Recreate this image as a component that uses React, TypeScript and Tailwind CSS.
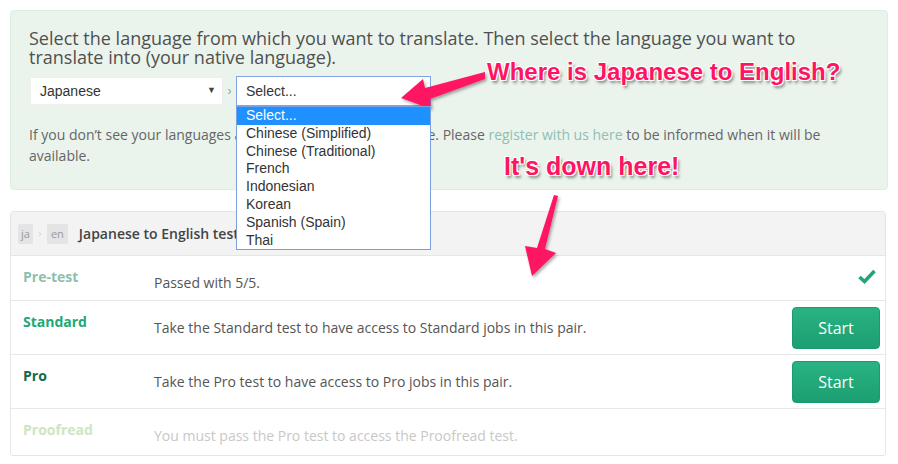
import React from 'react';

const options = [
  'Select...',
  'Chinese (Simplified)',
  'Chinese (Traditional)',
  'French',
  'Indonesian',
  'Korean',
  'Spanish (Spain)',
  'Thai',
];

const rows = [
  { label: 'Pre-test', labelColor: 'text-[#8dbfae]', text: 'Passed with 5/5.', textColor: 'text-[#555]', action: 'check', h: 'h-[45px]' },
  { label: 'Standard', labelColor: 'text-[#20a878]', text: 'Take the Standard test to have access to Standard jobs in this pair.', textColor: 'text-[#555]', action: 'start', h: 'h-[54px]' },
  { label: 'Pro', labelColor: 'text-[#116b47]', text: 'Take the Pro test to have access to Pro jobs in this pair.', textColor: 'text-[#555]', action: 'start', h: 'h-[54px]' },
  { label: 'Proofread', labelColor: 'text-[#cde6bf]', text: 'You must pass the Pro test to access the Proofread test.', textColor: 'text-[#c8c8c8]', action: 'none', h: 'h-[46px]' },
];

const shout =
  "font-['Liberation_Sans',Arial,sans-serif] font-bold text-[#ff1464] [text-shadow:1px_1px_0_#fff,-1px_-1px_0_#fff,1px_-1px_0_#fff,-1px_1px_0_#fff,2px_3px_3px_rgba(0,0,0,0.45)]";

const App: React.FC = () => {
  return (
    <div className="relative w-[898px] h-[464px] overflow-hidden bg-white font-['Open_Sans',sans-serif] px-[10px] pt-[10px]">

      {/* language picker panel */}
      <div className="rounded-[4px] border border-[#dcefdf] bg-[#eaf4ec] pl-[18px] pr-[18px] pt-[18px] pb-[23px]">
        <h2 className="text-[18px] leading-[19px] text-[#505050] pr-[60px]">
          Select the language from which you want to translate. Then select the language you want to translate into (your native language).
        </h2>
        <div className="mt-[9px] flex items-center font-['Liberation_Sans',Arial,sans-serif] text-[14px]">
          <div className="ml-px w-[193px] h-[28px] bg-white border border-[#eeeeee] flex items-center justify-between pl-[9px] pr-[6px] text-[#333]">
            <span>Japanese</span>
            <span className="text-[9px] text-[#444]">▼</span>
          </div>
          <span className="w-[13px] text-center text-[12px] text-[#999]">›</span>
          <div className="relative w-[195px] h-[30px] bg-white border border-[#7fa5e6] flex items-center pl-[9px] text-[#333]">
            <span>Select...</span>
            <ul className="absolute left-[-1px] top-[29px] w-[195px] bg-white border border-[#7a9fe0] z-10">
              {options.map((o, i) => (
                <li
                  key={o}
                  className={`h-[17.8px] leading-[17.8px] pl-[9px] ${i === 0 ? 'bg-[#1e90ff] text-white' : 'text-[#333]'}`}
                >
                  {o}
                </li>
              ))}
            </ul>
          </div>
        </div>
        <p className="mt-[18px] text-[14px] leading-[21px] text-[#666]">
          If you don’t see your languages above, they aren’t yet available. Please{' '}
          <span className="text-[#8fbeb3]">register with us here</span> to be informed when it will be available.
        </p>
      </div>

      {/* test card */}
      <div className="mt-[21px] mr-[2px] rounded-[3px] border border-[#e6e6e6] overflow-hidden">
        <div className="h-[44px] bg-[#f3f3f3] border-b border-[#e6e6e6] flex items-center pl-[7px]">
          <span className="h-[20px] px-[3px] rounded-[2px] bg-[#e4e4e4] text-[11px] leading-[20px] text-[#999]">ja</span>
          <span className="w-[14px] text-center text-[11px] text-[#d6d6d6]">›</span>
          <span className="h-[20px] px-[4px] rounded-[2px] bg-[#e4e4e4] text-[11px] leading-[20px] text-[#999]">en</span>
          <span className="ml-[11px] text-[14px] font-semibold text-[#444]">Japanese to English test</span>
        </div>
        {rows.map((r, i) => (
          <div
            key={r.label}
            className={`${r.h} flex items-start ${i < rows.length - 1 ? 'border-b border-[#e8e8e8]' : ''}`}
          >
            <div className={`w-[143px] pl-[12px] pt-[10px] text-[14px] font-bold ${r.labelColor}`}>{r.label}</div>
            <div className={`flex-1 pt-[16px] text-[14px] ${r.textColor}`}>{r.text}</div>
            {r.action === 'check' && (
              <svg className="mt-[13px] mr-[9px]" width="18" height="15" viewBox="0 0 18 15">
                <path d="M1.5 8 L6.5 12.5 L16.5 2" fill="none" stroke="#1fa67a" strokeWidth="3.6" />
              </svg>
            )}
            {r.action === 'start' && (
              <button className="mt-[6px] mr-[5px] w-[88px] h-[42px] rounded-[4px] border border-[#1a9a6e] bg-gradient-to-b from-[#29b382] to-[#1c9f72] text-white text-[16px]">
                Start
              </button>
            )}
          </div>
        ))}
      </div>

      {/* annotations */}
      <div className={`absolute left-[487px] top-[54px] text-[24px] ${shout}`}>Where is Japanese to English?</div>
      <div className={`absolute left-[504px] top-[148px] text-[25px] ${shout}`}>It's down here!</div>

      <svg className="absolute left-0 top-0 pointer-events-none" width="898" height="464" viewBox="0 0 898 464">
        <defs>
          <filter id="sh" x="-20%" y="-20%" width="140%" height="140%">
            <feDropShadow dx="1.5" dy="2" stdDeviation="1.5" floodColor="#000" floodOpacity="0.35" />
          </filter>
        </defs>
        <polygon
          points="401,98 423,79 425,88 485,72 485,79 430,99 431,109"
          fill="#ff1464"
          filter="url(#sh)"
        />
        <polygon
          points="554,195 558,196 545,249 556,253 532,276 525,246 537,248"
          fill="#ff1464"
          filter="url(#sh)"
        />
      </svg>
    </div>
  );
};

export default App;
